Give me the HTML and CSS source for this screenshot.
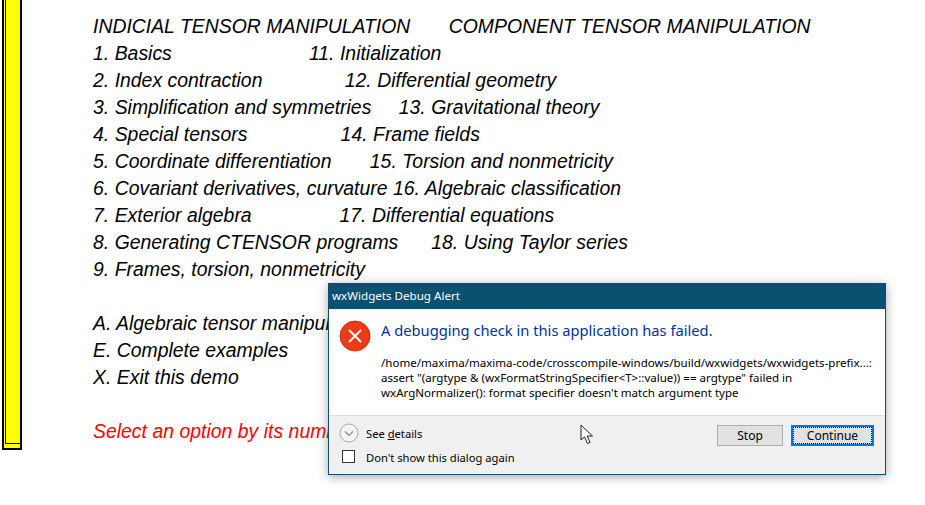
FILE: index.html
```html
<!DOCTYPE html>
<html lang="en">
<head>
<meta charset="utf-8">
<title>wxMaxima demo</title>
<link rel="stylesheet" href="styles.css">
</head>
<body>
<div class="page">
  <div class="bar"><div class="bar-inner"></div></div>
  <pre class="menu">INDICIAL TENSOR MANIPULATION       COMPONENT TENSOR MANIPULATION
1. Basics                         11. Initialization
2. Index contraction               12. Differential geometry
3. Simplification and symmetries     13. Gravitational theory
4. Special tensors                 14. Frame fields
5. Coordinate differentiation       15. Torsion and nonmetricity
6. Covariant derivatives, curvature 16. Algebraic classification
7. Exterior algebra                17. Differential equations
8. Generating CTENSOR programs      18. Using Taylor series
9. Frames, torsion, nonmetricity

A. Algebraic tensor manipulation
E. Complete examples
X. Exit this demo

<span class="prompt">Select an option by its number</span></pre>
</div>
<section class="dialog">
  <header class="titlebar">wxWidgets Debug Alert</header>
  <div class="content">
    <svg class="err" viewBox="0 0 32 32" width="32" height="32"><circle cx="16" cy="16" r="15" fill="#f03a17" stroke="#c9300f"/><path d="M10 10L22 22M22 10L10 22" stroke="#fff" stroke-width="2" fill="none"/></svg>
    <div class="messages">
      <h1 class="headline">A debugging check in this application has failed.</h1>
      <p class="detail">/home/maxima/maxima-code/crosscompile-windows/build/wxwidgets/wxwidgets-prefix...:<br>assert "(argtype &amp; (wxFormatStringSpecifier&lt;T&gt;::value)) == argtype" failed in<br>wxArgNormalizer(): format specifier doesn't match argument type</p>
    </div>
  </div>
  <div class="footer">
    <div class="footer-left">
      <div class="row">
        <svg class="chev" viewBox="0 0 20 20" width="20" height="20"><circle cx="10" cy="10" r="9" fill="#f4f4f4" stroke="#a8a8a8"/><path d="M6 8.5L10 12.5L14 8.5" stroke="#8a8a8a" stroke-width="1.2" fill="none"/></svg>
        <span>See <u>d</u>etails</span>
      </div>
      <label class="row check-row"><span class="box"></span><span>Don't show this dialog again</span></label>
    </div>
    <div class="buttons">
      <button class="btn">Stop</button>
      <button class="btn primary"><span class="focus">Continue</span></button>
    </div>
  </div>
</section>
<svg class="cursor" viewBox="0 0 14 21" width="14" height="21"><path d="M1 1V16L4.5 12.8L7.5 19.5L10 18.4L7.2 12H12.5Z" fill="#fff" stroke="#222" stroke-width="1"/></svg>
</body>
</html>
```
FILE: styles.css
```css
html, body { margin: 0; padding: 0; background: #fff; }
body { width: 925px; height: 505px; overflow: hidden; position: relative; }
.page { display: flex; align-items: flex-start; padding-left: 2px; }
.bar { width: 20px; height: 450px; box-sizing: border-box; background: #ff0; border: 2px solid #000; border-top: 0; padding: 0 0 4px 1px; }
.bar-inner { height: 100%; box-sizing: border-box; border: 1px solid #000; border-top: 0; border-right: 0; }
.menu { margin: 13px 0 0 71px; font: italic 19.4px/27px "Liberation Sans", Arial, sans-serif; word-spacing: .1px; color: #000; white-space: pre; }
.prompt { color: #f00; }
.dialog { position: absolute; left: 328px; top: 283px; width: 558px; height: 192px; box-sizing: border-box; border: 1px solid #0a5070; border-top: 0; background: #fff; box-shadow: 0 2px 10px rgba(0,0,0,.35); display: flex; flex-direction: column; font: 12px "Noto Sans", "Open Sans", sans-serif; color: #000; }
.titlebar { height: 26px; background: #0a5070; color: #fff; padding-left: 4px; line-height: 26px; font-size: 11.6px; flex: none; margin: 0 -1px; }
.content { flex: 1; display: flex; padding: 11px 0 0 10px; gap: 10px; }
.err { flex: none; }
.headline { margin: 0; font-size: 14.7px; font-weight: 400; color: #039; line-height: 20px; }
.detail { margin: 15px 0 0; font-size: 11.55px; line-height: 15px; }
.footer { flex: none; height: 59px; box-sizing: border-box; background: #f0f0f0; border-top: 1px solid #dfdfdf; display: flex; justify-content: space-between; padding: 7px 11px 0 10px; }
.footer-left { display: flex; flex-direction: column; gap: 4px; font-size: 11.2px; }
.row { display: flex; align-items: center; gap: 7px; height: 20px; }
.check-row { padding-left: 3px; gap: 11px; }
.box { width: 11px; height: 11px; border: 1px solid #333; background: #fff; margin-bottom: 2px; }
.buttons { display: flex; gap: 8px; align-items: flex-start; padding-top: 2px; }
.btn { width: 66px; height: 21px; padding: 0; background: #e1e1e1; border: 1px solid #adadad; font: inherit; color: #000; }
.btn.primary { width: 83px; border: 2px solid #0078d7; display: flex; }
.focus { flex: 1; border: 1px dotted #000; line-height: 15px; }
.cursor { position: absolute; left: 580px; top: 424px; }
```
